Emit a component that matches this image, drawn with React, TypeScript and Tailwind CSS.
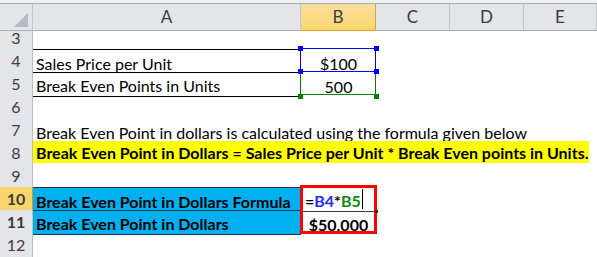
const COLS = "grid grid-cols-[33px_268px_75px_74px_74px_73px]"

const RowHead = ({ n, active = false }: { n: number; active?: boolean }) => (
  <div
    className={
      active
        ? "flex items-center justify-center border-r border-b border-r-[#c99a3c] border-b-[#e0b55a] bg-[#fcd46c] text-[16px] text-[#3c3c3c]"
        : "flex items-center justify-center border-r border-b border-r-[#b9bec5] border-b-[#c8ccd1] bg-[#e3e5e8] text-[16px] text-[#3c3c3c]"
    }
  >
    {n}
  </div>
)

// little square handles that sit on the corners of a referenced range
const Handle = ({ className }: { className: string }) => (
  <span className={`absolute h-[5px] w-[5px] ${className}`} />
)

const ColHead = ({ label, active = false }: { label: string; active?: boolean }) => (
  <div
    className={
      active
        ? "flex items-center justify-center border-r border-b border-[#e2a13b] bg-linear-to-b from-[#fbdf9c] to-[#fbd66d] text-[17px] text-[#3c3c3c]"
        : "flex items-center justify-center border-r border-b border-r-[#c3c7cc] border-b-[#a9aeb4] bg-[#e3e5e8] text-[17px] text-[#3c3c3c]"
    }
  >
    {label}
  </div>
)

export default function App() {
  return (
    <div className="h-[257px] w-[597px] overflow-hidden bg-white font-['Lato',sans-serif] text-black">
      <div className="h-[4px] border-b border-[#a3a8ae] bg-[#eef0f2]" />

      {/* column letters */}
      <div className={`${COLS} h-[22px]`}>
        <div className="relative border-r border-b border-r-[#c3c7cc] border-b-[#a9aeb4] bg-[#e3e5e8]">
          <svg className="absolute right-[4px] bottom-[3px]" width="14" height="14" viewBox="0 0 14 14">
            <polygon points="14,0 14,14 0,14" fill="#b6bbc1" />
          </svg>
        </div>
        <ColHead label="A" />
        <ColHead label="B" active />
        <ColHead label="C" />
        <ColHead label="D" />
        <ColHead label="E" />
      </div>

      {/* row 3 */}
      <div className={`${COLS} h-[23px]`}>
        <RowHead n={3} />
      </div>

      {/* row 4 */}
      <div className={`${COLS} h-[23px] text-[16px]`}>
        <RowHead n={4} />
        <div className="flex items-end border-t border-black pb-[1px] pl-[3px] leading-[19px]">Sales Price per Unit</div>
        <div className="relative flex items-end justify-center pb-[1px] leading-[19px]">
          $100
          <div className="absolute -top-px -left-px h-[24px] w-[76px] border border-[#0000ff]" />
          <Handle className="-top-[3px] -left-[3px] bg-[#0000ff]" />
          <Handle className="-top-[3px] -right-[3px] bg-[#0000ff]" />
        </div>
      </div>

      {/* row 5 */}
      <div className={`${COLS} h-[23px] text-[16px]`}>
        <RowHead n={5} />
        <div className="flex items-end border-t border-b border-black pb-[1px] pl-[3px] leading-[19px]">
          Break Even Points in Units
        </div>
        <div className="relative flex items-end justify-center pb-[1px] leading-[19px]">
          500
          <div className="absolute top-0 -left-px h-[23px] w-[76px] border border-t-0 border-[#008000]" />
          <Handle className="-top-[3px] -left-[3px] bg-[#0000ff]" />
          <Handle className="-top-[3px] -right-[3px] bg-[#0000ff]" />
          <Handle className="-bottom-[2px] -left-[3px] bg-[#008000]" />
          <Handle className="-bottom-[2px] -right-[3px] bg-[#008000]" />
        </div>
      </div>

      {/* row 6 */}
      <div className={`${COLS} h-[23px]`}>
        <RowHead n={6} />
      </div>

      {/* row 7 */}
      <div className={`${COLS} h-[23px] text-[16px]`}>
        <RowHead n={7} />
        <div className="col-span-5 flex items-end pb-[1px] pl-[3px] leading-[19px] whitespace-nowrap">
          Break Even Point in dollars is calculated using the formula given below
        </div>
      </div>

      {/* row 8 */}
      <div className={`${COLS} h-[23px] text-[16px]`}>
        <RowHead n={8} />
        <div className="col-span-5 flex">
          <div className="flex h-[22px] w-[556px] items-end bg-[#ffff00] pb-[1px] pl-[3px] leading-[19px] font-bold whitespace-nowrap">
            Break Even Point in Dollars = Sales Price per Unit * Break Even points in Units.
          </div>
        </div>
      </div>

      {/* row 9 */}
      <div className={`${COLS} h-[23px]`}>
        <RowHead n={9} />
      </div>

      {/* row 10 */}
      <div className={`${COLS} h-[23px] text-[16px] font-bold`}>
        <RowHead n={10} active />
        <div className="flex items-end border-t border-[#1d3440] bg-[#00b0f0] pb-[1px] pl-[3px] leading-[19px] whitespace-nowrap">
          Break Even Point in Dollars Formula
        </div>
        <div className="relative flex items-end border-b border-[#3a3a3a] pb-[1px] pl-[4px] leading-[19px]">
          <span>=</span>
          <span className="text-[#2b2bff]">B4</span>
          <span>*</span>
          <span className="text-[#0d8a12]">B5</span>
          <span className="mb-[1px] ml-[1px] h-[20px] w-px bg-black" />
          <div className="absolute -top-[2px] -left-px h-[49px] w-[77px] border-[3px] border-[#ff0000]" />
          <span className="absolute -right-[2px] -bottom-[2px] h-[3px] w-[3px] bg-[#333]" />
        </div>
      </div>

      {/* row 11 */}
      <div className={`${COLS} h-[23px] text-[16px] font-bold`}>
        <RowHead n={11} />
        <div className="flex items-end border-t border-b border-[#1d3440] bg-[#00b0f0] pb-[1px] pl-[3px] leading-[19px]">
          Break Even Point in Dollars
        </div>
        <div className="flex items-end justify-center pb-[1px] leading-[19px]">$50,000</div>
      </div>

      {/* row 12 */}
      <div className={`${COLS} h-[23px]`}>
        <RowHead n={12} />
      </div>
    </div>
  )
}
